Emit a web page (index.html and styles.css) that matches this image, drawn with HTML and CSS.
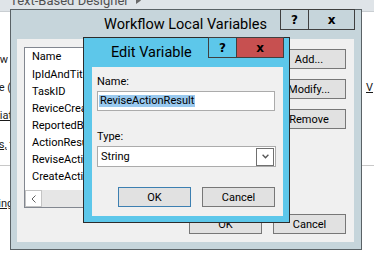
FILE: index.html
```html
<!DOCTYPE html>
<html>
<head>
<meta charset="utf-8">
<title>Edit Variable</title>
<link rel="stylesheet" href="styles.css">
</head>
<body>
<div class="page">
  <header class="topbar">
    <span class="crumb">Text-Based Designer</span>
    <svg class="crumb-arrow" width="5" height="7" viewBox="0 0 5 7"><polygon points="0,0 5,3.5 0,7" fill="#6a6a6a"/></svg>
  </header>
  <div class="upper">
    <div class="left-col">
      <div class="ln l1"><span>Allow</span></div>
      <div class="ln l2"><span>Name (</span></div>
      <div class="ln l3"><u>Associat</u></div>
      <div class="ln l4"><span><u>Items,</u> t</span></div>
    </div>
    <div class="right-col">
      <div class="ln"><u>V</u></div>
    </div>
  </div>
  <div class="rule"></div>
  <div class="lower">
    <div class="left-col">
      <div class="ln l5"><u>Logging&nbsp;</u></div>
    </div>
  </div>
</div>

<section class="win wf">
  <div class="titlebar">
    <div class="title">Workflow Local Variables</div>
    <div class="tbtns">
      <span class="tb help">?</span>
      <span class="tb close">x</span>
    </div>
  </div>
  <div class="client wf-client">
    <div class="wf-body">
      <div class="listbox">
        <div class="lv-head">Name</div>
        <div class="lv-rows">
          <div class="lv-row">IpIdAndTitle</div>
          <div class="lv-row">TaskID</div>
          <div class="lv-row">ReviceCreatedBy</div>
          <div class="lv-row">ReportedBy</div>
          <div class="lv-row">ActionResult</div>
          <div class="lv-row">ReviseActionResult</div>
          <div class="lv-row">CreateActionResult</div>
        </div>
        <div class="hscroll">
          <span class="sb-btn"><svg width="5" height="8" viewBox="0 0 5 8"><polyline points="4.5,0.5 1,4 4.5,7.5" fill="none" stroke="#606060" stroke-width="1"/></svg></span>
          <span class="sb-track"></span>
        </div>
      </div>
      <div class="btncol">
        <span class="btn side">Add...</span>
        <span class="btn side">Modify...</span>
        <span class="btn side">Remove</span>
      </div>
    </div>
    <div class="footer">
      <span class="btn">OK</span>
      <span class="btn">Cancel</span>
    </div>
  </div>
</section>

<section class="win ev">
  <div class="titlebar">
    <div class="title">Edit Variable</div>
    <div class="tbtns">
      <span class="tb help">?</span>
      <span class="tb close">x</span>
    </div>
  </div>
  <div class="client ev-client">
    <div class="label name-label">Name:</div>
    <div class="textbox"><span class="sel">ReviseActionResult</span></div>
    <div class="label type-label">Type:</div>
    <div class="combo">
      <span class="combo-text">String</span>
      <span class="combo-btn"><svg width="7" height="5" viewBox="0 0 7 5"><polyline points="0.6,0.8 3.5,3.8 6.4,0.8" fill="none" stroke="#555" stroke-width="1.3"/></svg></span>
    </div>
    <div class="footer ev-footer">
      <span class="btn default">OK</span>
      <span class="btn">Cancel</span>
    </div>
  </div>
</section>
</body>
</html>
```

FILE: styles.css
```css
* { box-sizing: border-box; }
html, body { margin: 0; padding: 0; }
body {
  width: 374px;
  height: 259px;
  overflow: hidden;
  position: relative;
  background: #ffffff;
  font-family: Roboto, "Liberation Sans", sans-serif;
  font-size: 11px;
  color: #000;
}

/* background page */
.topbar {
  height: 12px;
  background: #dfe4e8;
  border-bottom: 1px solid #c9ced2;
  display: flex;
  align-items: flex-start;
  padding-left: 10px;
  gap: 7px;
  overflow: hidden;
}
.crumb {
  font-size: 13px;
  line-height: 13px;
  margin-top: -6px;
  color: #505050;
  white-space: nowrap;
}
.crumb-arrow { margin-top: -3px; }

.upper {
  height: 153px;
  display: flex;
  justify-content: space-between;
}
.left-col { width: 10px; }
.right-col { width: 12px; padding-top: 69px; padding-left: 4px; }
.ln {
  height: 14px;
  line-height: 14px;
  display: flex;
  justify-content: flex-end;
  white-space: nowrap;
  color: #1a1a1a;
}
.right-col .ln { justify-content: flex-start; }
.l1 { margin-top: 41px; padding-right: 2px; }
.l2 { margin-top: 14px; margin-right: -1px; }
.l3 { margin-top: 14px; margin-right: -2px; }
.l4 { margin-top: 15px; margin-right: -3px; }
.rule { height: 1px; background: #c8c8c8; }
.l5 { margin-top: 31px; margin-right: -6px; }

/* windows */
.win {
  position: absolute;
  display: flex;
  flex-direction: column;
}
.wf {
  left: 10px;
  top: 9px;
  width: 352px;
  height: 241px;
  background: #c6d5db;
  border: 1px solid #5a6266;
  padding: 0 7px 7px 6px;
}
.ev {
  left: 83px;
  top: 37px;
  width: 207px;
  height: 186px;
  background: #5dc7ea;
  border: 1px solid #2c2c2c;
  padding: 0 6px 6px 8px;
}
.titlebar {
  height: 29px;
  display: grid;
  flex: none;
}
.title, .tbtns { grid-area: 1 / 1; }
.title {
  font-size: 14.5px;
  line-height: 29px;
  color: #000;
  white-space: nowrap;
}
.wf .title { justify-self: center; }
.ev .title { justify-self: start; padding-left: 19px; }
.tbtns {
  justify-self: end;
  align-self: start;
  display: flex;
  margin-top: -1px;
  margin-right: -1px;
}
.tb {
  height: 21px;
  border: 1px solid #404040;
  display: flex;
  align-items: center;
  justify-content: center;
  font-weight: bold;
  font-size: 12px;
  line-height: 1;
  color: #000;
  font-family: "DejaVu Sans", sans-serif;
}
.tb.help { width: 29px; }
.tb.close { width: 47px; margin-left: -1px; }
.ev .tb.close { width: 48px; background: #c75050; }

.client {
  flex: 1;
  background: #f0f0f0;
  display: flex;
  flex-direction: column;
}

/* workflow dialog body */
.wf-client { padding: 8px 0 0 7px; }
.wf-body { display: flex; align-items: flex-start; }
.listbox {
  width: 238px;
  height: 161px;
  border: 1px solid #828790;
  background: #fff;
  display: flex;
  flex-direction: column;
}
.lv-head {
  height: 18px;
  line-height: 17px;
  padding-left: 7px;
  white-space: nowrap;
}
.lv-rows { flex: 1; overflow: hidden; }
.lv-row {
  height: 17px;
  line-height: 17px;
  padding-left: 7px;
  white-space: nowrap;
}
.hscroll { height: 17px; display: flex; }
.sb-btn {
  width: 17px;
  background: #fff;
  border: 1px solid #c4c4c4;
  display: flex;
  align-items: center;
  justify-content: center;
}
.sb-track { flex: 1; background: #e6e6e6; }

.btncol {
  margin-left: 10px;
  margin-top: 2px;
  width: 74px;
  display: flex;
  flex-direction: column;
  gap: 10px;
}
.btn {
  height: 20px;
  width: 73px;
  background: #e1e1e1;
  border: 1px solid #777;
  display: flex;
  align-items: center;
  justify-content: center;
  white-space: nowrap;
  color: #000;
}
.btn.side { width: 74px; }
.btn.default { border-color: #3c7fb1; }
.footer {
  display: flex;
  justify-content: flex-end;
  gap: 11px;
  padding-right: 8px;
  margin-top: 6px;
}

/* edit variable body */
.ev-client { padding: 0 8px 0 5px; }
.label { line-height: 14px; height: 14px; }
.name-label { margin-top: 8px; }
.textbox {
  margin-top: 2px;
  width: 178px;
  height: 20px;
  border: 1px solid #ababab;
  background: #fff;
  display: flex;
  align-items: center;
  padding-left: 1px;
}
.sel {
  background: #99c9ef;
  line-height: 12px;
  height: 12px;
  padding: 0 1px;
}
.type-label { margin-top: 19px; }
.combo {
  margin-top: 2px;
  width: 179px;
  height: 21px;
  border: 1px solid #ababab;
  background: #fff;
  display: flex;
  align-items: center;
  padding: 0 1px 0 3px;
}
.combo-text { flex: 1; }
.combo-btn {
  width: 18px;
  height: 18px;
  border: 1px solid #707070;
  background: #fff;
  display: flex;
  align-items: center;
  justify-content: center;
}
.ev-footer { margin-top: 20px; padding-right: 0; }
```
